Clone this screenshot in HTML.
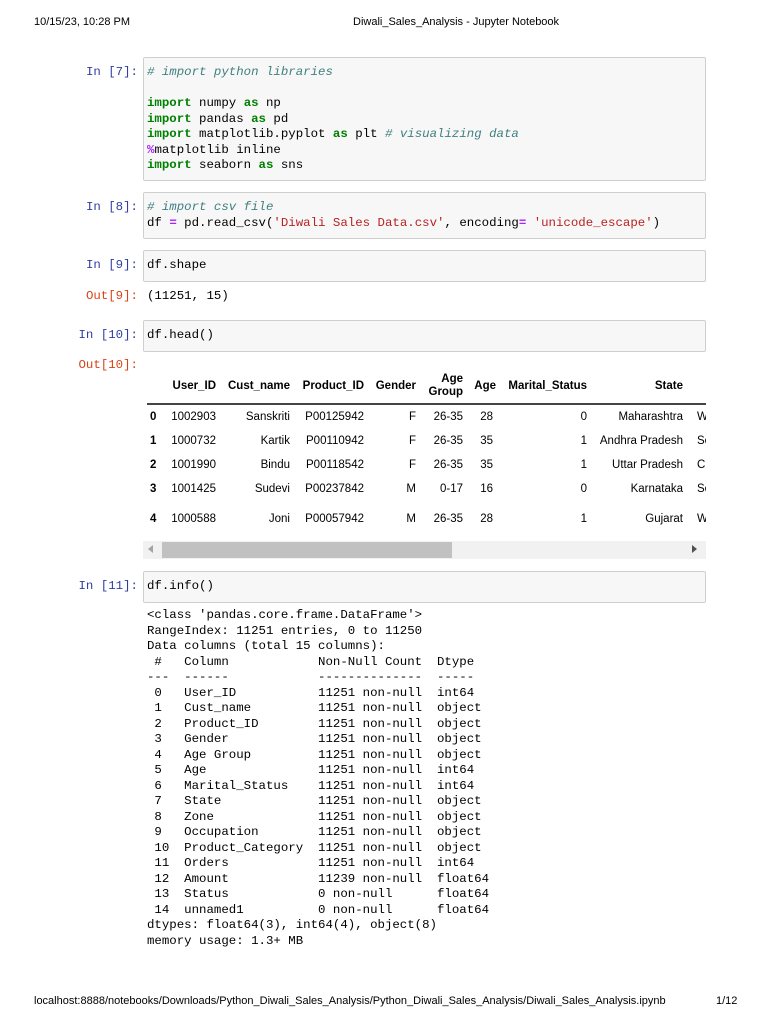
<!DOCTYPE html>
<html><head><meta charset="utf-8"><style>
*{margin:0;padding:0;box-sizing:border-box}
body{width:768px;height:1024px;background:#fff;position:relative;overflow:hidden;font-family:"Liberation Sans",sans-serif}
.a{position:absolute;white-space:pre}
.hd{font-size:11px;color:#000}
.box{position:absolute;left:143px;width:563px;border:1px solid #cfcfcf;background:#f7f7f7;border-radius:2px}
.m{font-family:"Liberation Mono",monospace;font-size:12.4px;line-height:15.5px;color:#000}
.pin{font-family:"Liberation Mono",monospace;font-size:12.4px;color:#303f9f;text-align:right;width:100px;left:38px}
.pout{font-family:"Liberation Mono",monospace;font-size:12.4px;color:#d84315;text-align:right;width:100px;left:38px}
.c{color:#408080;font-style:italic}
.k{color:#008000;font-weight:bold}
.o{color:#aa22ff;font-weight:bold}
.s{color:#ba2121}
.t{font-size:11.5px;color:#000}
.th{font-weight:bold;font-size:11.5px}
.r{text-align:right}
</style></head><body>
<div class="a hd" style="left:34px;top:16px">10/15/23, 10:28 PM</div>
<div class="a hd" style="left:353px;top:16px">Diwali_Sales_Analysis - Jupyter Notebook</div>

<div class="a pin" style="top:65px">In [7]:</div>
<div class="box" style="top:57px;height:124px"></div>
<div class="a m" style="left:147px;top:65px"><span class="c"># import python libraries</span>

<span class="k">import</span> numpy <span class="k">as</span> np
<span class="k">import</span> pandas <span class="k">as</span> pd
<span class="k">import</span> matplotlib.pyplot <span class="k">as</span> plt <span class="c"># visualizing data</span>
<span class="o">%</span>matplotlib inline
<span class="k">import</span> seaborn <span class="k">as</span> sns</div>

<div class="a pin" style="top:200px">In [8]:</div>
<div class="box" style="top:192px;height:47px"></div>
<div class="a m" style="left:147px;top:200px"><span class="c"># import csv file</span>
df <span class="o">=</span> pd.read_csv(<span class="s">'Diwali Sales Data.csv'</span>, encoding<span class="o">=</span> <span class="s">'unicode_escape'</span>)</div>

<div class="a pin" style="top:258px">In [9]:</div>
<div class="box" style="top:250px;height:32px"></div>
<div class="a m" style="left:147px;top:258px">df.shape</div>
<div class="a pout" style="top:289px">Out[9]:</div>
<div class="a m" style="left:147px;top:289px">(11251, 15)</div>

<div class="a pin" style="top:328px">In [10]:</div>
<div class="box" style="top:320px;height:32px"></div>
<div class="a m" style="left:147px;top:328px">df.head()</div>
<div class="a pout" style="top:358px">Out[10]:</div>

<div class="a th r" style="left:150px;width:66px;top:380px">User_ID</div>
<div class="a th r" style="left:220px;width:70px;top:380px">Cust_name</div>
<div class="a th r" style="left:295px;width:69px;top:380px">Product_ID</div>
<div class="a th r" style="left:370px;width:46px;top:380px">Gender</div>
<div class="a th r" style="left:420px;width:43px;top:373px;line-height:13px">  Age
Group</div>
<div class="a th r" style="left:468px;width:28px;top:380px">Age</div>
<div class="a th r" style="left:500px;width:87px;top:380px">Marital_Status</div>
<div class="a th r" style="left:600px;width:83px;top:380px">State</div>
<div style="position:absolute;left:147px;top:403px;width:559px;height:2px;background:#444"></div>

<div class="a t" style="left:150px;top:405px;line-height:24px"><b>0</b>
<b>1</b>
<b>2</b>
<b>3</b></div>
<div class="a t" style="left:150px;top:513px"><b>4</b></div>
<div class="a t r" style="left:160px;width:56px;top:405px;line-height:24px">1002903
1000732
1001990
1001425</div>
<div class="a t r" style="left:160px;width:56px;top:513px">1000588</div>
<div class="a t r" style="left:220px;width:70px;top:405px;line-height:24px">Sanskriti
Kartik
Bindu
Sudevi</div>
<div class="a t r" style="left:220px;width:70px;top:513px">Joni</div>
<div class="a t r" style="left:295px;width:69px;top:405px;line-height:24px">P00125942
P00110942
P00118542
P00237842</div>
<div class="a t r" style="left:295px;width:69px;top:513px">P00057942</div>
<div class="a t r" style="left:370px;width:46px;top:405px;line-height:24px">F
F
F
M</div>
<div class="a t r" style="left:370px;width:46px;top:513px">M</div>
<div class="a t r" style="left:420px;width:43px;top:405px;line-height:24px">26-35
26-35
26-35
0-17</div>
<div class="a t r" style="left:420px;width:43px;top:513px">26-35</div>
<div class="a t r" style="left:468px;width:25px;top:405px;line-height:24px">28
35
35
16</div>
<div class="a t r" style="left:468px;width:25px;top:513px">28</div>
<div class="a t r" style="left:500px;width:87px;top:405px;line-height:24px">0
1
1
0</div>
<div class="a t r" style="left:500px;width:87px;top:513px">1</div>
<div class="a t r" style="left:590px;width:93px;top:405px;line-height:24px">Maharashtra
Andhra Pradesh
Uttar Pradesh
Karnataka</div>
<div class="a t r" style="left:590px;width:93px;top:513px">Gujarat</div>
<div style="position:absolute;left:697px;top:400px;width:9px;height:130px;overflow:hidden"><div class="a t" style="left:0;top:5px;line-height:24px">W
So
C
So</div><div class="a t" style="left:0;top:113px">W</div></div>

<div style="position:absolute;left:143px;top:541px;width:563px;height:18px;background:#f1f1f1"></div>
<div style="position:absolute;left:162px;top:542px;width:290px;height:16px;background:#c1c1c1"></div>
<div class="a" style="left:148px;top:545px;width:0;height:0;border-top:4px solid transparent;border-bottom:4px solid transparent;border-right:5px solid #a3a3a3"></div>
<div class="a" style="left:692px;top:545px;width:0;height:0;border-top:4px solid transparent;border-bottom:4px solid transparent;border-left:5px solid #505050"></div>

<div class="a pin" style="top:579px">In [11]:</div>
<div class="box" style="top:571px;height:32px"></div>
<div class="a m" style="left:147px;top:579px">df.info()</div>
<div class="a m" style="left:147px;top:608px">&lt;class 'pandas.core.frame.DataFrame'&gt;
RangeIndex: 11251 entries, 0 to 11250
Data columns (total 15 columns):
 #   Column            Non-Null Count  Dtype  
---  ------            --------------  -----  
 0   User_ID           11251 non-null  int64  
 1   Cust_name         11251 non-null  object 
 2   Product_ID        11251 non-null  object 
 3   Gender            11251 non-null  object 
 4   Age Group         11251 non-null  object 
 5   Age               11251 non-null  int64  
 6   Marital_Status    11251 non-null  int64  
 7   State             11251 non-null  object 
 8   Zone              11251 non-null  object 
 9   Occupation        11251 non-null  object 
 10  Product_Category  11251 non-null  object 
 11  Orders            11251 non-null  int64  
 12  Amount            11239 non-null  float64
 13  Status            0 non-null      float64
 14  unnamed1          0 non-null      float64
dtypes: float64(3), int64(4), object(8)
memory usage: 1.3+ MB</div>

<div class="a hd" style="left:34px;top:995px">localhost:8888/notebooks/Downloads/Python_Diwali_Sales_Analysis/Python_Diwali_Sales_Analysis/Diwali_Sales_Analysis.ipynb</div>
<div class="a hd" style="left:716px;top:995px">1/12</div>
</body></html>
